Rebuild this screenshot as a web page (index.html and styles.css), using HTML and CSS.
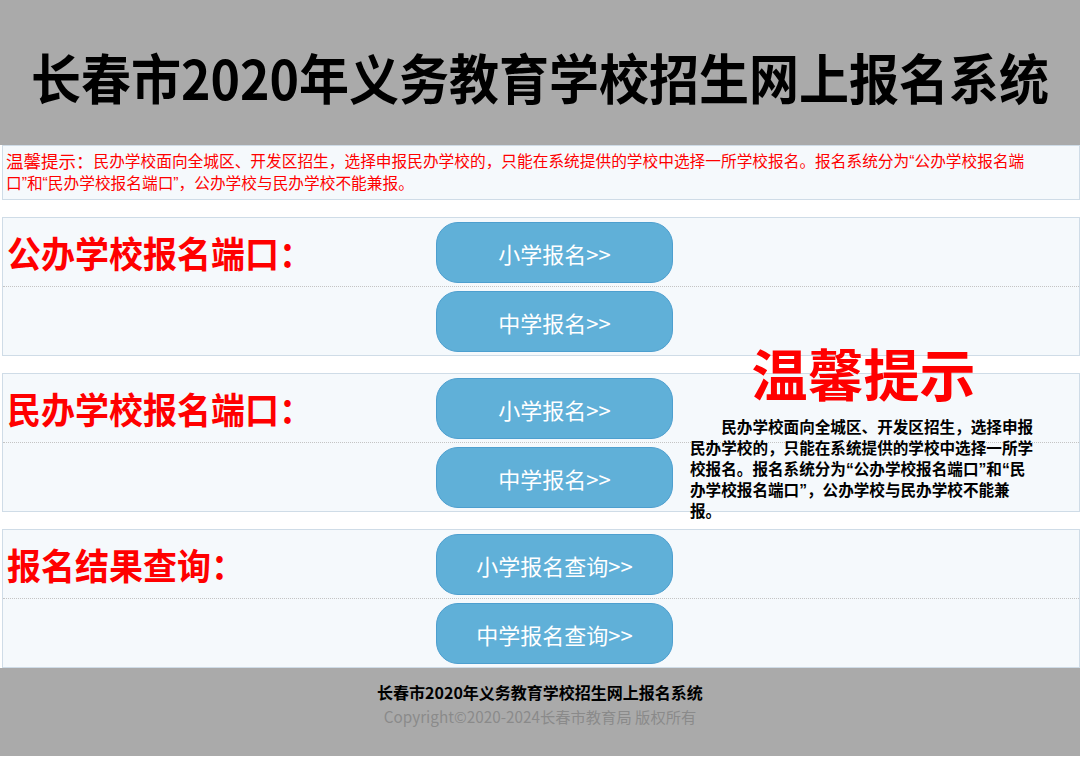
FILE: index.html
```html
<!DOCTYPE html>
<html lang="zh-CN">
<head>
    <meta charset="UTF-8">
    <meta name="viewport" content="width=device-width, initial-scale=1.0">
    <title>长春市2020年义务教育学校招生网上报名系统</title>
    <link rel="stylesheet" href="styles.css">
</head>
<body>

    <div class="header">
        <h1>长春市2020年义务教育学校招生网上报名系统</h1>
    </div>

    <div class="notice">
        <span class="notice-title">温馨提示：</span>民办学校面向全城区、开发区招生，选择申报民办学校的，只能在系统提供的学校中选择一所学校报名。报名系统分为“公办学校报名端<br>口”和“民办学校报名端口”，公办学校与民办学校不能兼报。
    </div>

    <div class="main">

        <div class="section">
            <div class="row">
                <div class="label">公办学校报名端口：</div>
                <a class="btn" href="#">小学报名&gt;&gt;</a>
            </div>
            <div class="row">
                <div class="label"></div>
                <a class="btn" href="#">中学报名&gt;&gt;</a>
            </div>
        </div>

        <div class="section">
            <div class="row">
                <div class="label">民办学校报名端口：</div>
                <a class="btn" href="#">小学报名&gt;&gt;</a>
            </div>
            <div class="row">
                <div class="label"></div>
                <a class="btn" href="#">中学报名&gt;&gt;</a>
            </div>
        </div>

        <div class="section">
            <div class="row">
                <div class="label">报名结果查询：</div>
                <a class="btn" href="#">小学报名查询&gt;&gt;</a>
            </div>
            <div class="row">
                <div class="label"></div>
                <a class="btn" href="#">中学报名查询&gt;&gt;</a>
            </div>
        </div>

        <div class="tips">
            <h2>温馨提示</h2>
            <p>民办学校面向全城区、开发区招生，选择申报民办学校的，只能在系统提供的学校中选择一所学校报名。报名系统分为“公办学校报名端口”和“民办学校报名端口”，公办学校与民办学校不能兼报。</p>
        </div>

    </div>

    <div class="footer">
        <p class="footer-name">长春市2020年义务教育学校招生网上报名系统</p>
        <p class="copyright">Copyright©2020-2024长春市教育局 版权所有</p>
    </div>

</body>
</html>
```

FILE: styles.css
```css
body {
    margin: 0;
    font-family: "Noto Sans CJK SC", "Noto Sans", sans-serif;
    background: #fff;
}

.header {
    background-color: #aaaaaa;
    height: 145px;
    display: flex;
    align-items: center;
    justify-content: center;
}

.header h1 {
    margin: 0;
    font-size: 50px;
    font-weight: 700;
    color: #000;
    padding-top: 6px;
    transform: scaleY(1.08);
}

/* quotes come from the latin font so they stay narrow */
.notice, .tips p {
    font-family: "Liberation Sans", "Noto Sans CJK SC", sans-serif;
}

.notice {
    margin-left: 2px;
    border: 1px solid #cfdce7;
    background: #f5f9fc;
    color: #ff0000;
    font-size: 15.7px;
    line-height: 22px;
    padding: 5px 0 0 3px;
    box-sizing: border-box;
    height: 55px;
    white-space: nowrap;
}

.notice-title {
    font-size: 17.5px;
    vertical-align: top;
}

.main {
    position: relative;
}

.section {
    margin: 17px 0 0 2px;
    border: 1px solid #cfdce7;
    background: #f5f9fc;
}

.row {
    display: flex;
    align-items: center;
    height: 68px;
    padding-top: 1px;
    box-sizing: border-box;
}

.row + .row {
    border-top: 1px dotted #c4c4c4;
    height: 69px;
}

.label {
    width: 433px;
    padding-left: 4px;
    box-sizing: border-box;
    color: #ff0000;
    font-size: 34px;
    font-weight: 700;
    transform: scaleY(1.08);
}

.btn {
    width: 237px;
    height: 61px;
    box-sizing: border-box;
    border: 1px solid #4d9fcf;
    border-radius: 22px;
    background-color: #60b0d8;
    color: #fff;
    font-size: 22px;
    text-decoration: none;
    display: flex;
    align-items: center;
    justify-content: center;
}

.tips {
    position: absolute;
    left: 690px;
    top: 124px;
    width: 347px;
}

.tips h2 {
    margin: 0;
    text-align: center;
    color: #ff0000;
    font-size: 56px;
    font-weight: 700;
    line-height: 62px;
}

.tips p {
    margin: 14px 0 0;
    text-indent: 2em;
    color: #000;
    font-size: 15.6px;
    font-weight: 700;
    line-height: 21px;
}

.footer {
    background-color: #aaaaaa;
    height: 88px;
    padding-top: 12px;
    box-sizing: border-box;
    text-align: center;
}

.footer p {
    margin: 0;
    line-height: 24px;
}

.footer-name {
    font-size: 16px;
    font-weight: 700;
    color: #000;
}

.copyright {
    font-size: 15.3px;
    color: #8a8a8a;
}
```
